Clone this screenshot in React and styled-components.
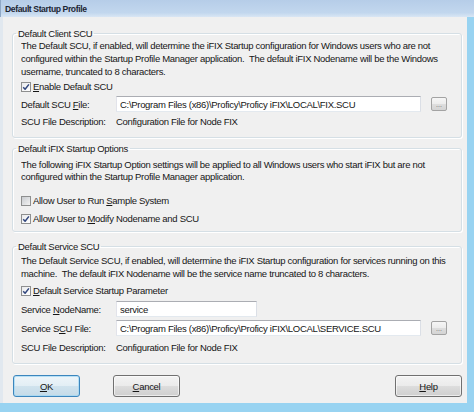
import React from 'react';
import styled, { createGlobalStyle } from 'styled-components';

const FONT = `"Liberation Sans", Arial, sans-serif`;

const Global = createGlobalStyle`
  html, body { margin: 0; padding: 0; }
  body {
    width: 474px; height: 412px; overflow: hidden; background: #98d3f1;
    font-family: ${FONT};
    color: #161616;
  }
`;

const Window = styled.div`
  width: 474px; height: 412px; box-sizing: border-box;
  display: flex; flex-direction: column;
  background: #98d3f1;
`;

const TitleBar = styled.div`
  height: 17px; flex: none; box-sizing: border-box;
  display: flex; align-items: center; padding-left: 4px;
  background: linear-gradient(#b6cde8, #c2d7ee 75%, #d9e6f4);
  border-left: 1px solid #8fa8c6;
  font-family: ${FONT}; font-weight: bold; font-size: 8.6px; letter-spacing: -0.4px; color: #1c2533;
`;

const Body = styled.div`
  flex: 1; display: flex; padding: 0 7px 9px 0; min-height: 0; min-width: 0;
`;

const Client = styled.div`
  flex: 1; box-sizing: border-box; min-width: 0;
  display: flex; flex-direction: column;
  background: #f0f0f0;
  border-left: 3px solid #e1e8ef;
  padding: 9.5px 5px 0 9px;
  font-family: ${FONT}; font-size: 9.5px; letter-spacing: -0.3px;
`;

const GroupBox = styled.fieldset`
  margin: ${p => p.$mt || 0}px 0 0 0;
  padding: 0 8px ${p => p.$pb}px 8px;
  border: 1px solid #d5dfe5;
  border-radius: 3px;
  box-shadow: inset 1px 1px 0 #fff, 1px 1px 0 #fff;
  min-width: 0;
  display: flex; flex-direction: column;
`;

const Legend = styled.legend`
  padding: 0 2px; margin-left: -5px;
  line-height: 13px; color: #161616;
`;

const Desc = styled.p`
  margin: ${p => p.$mt}px 0 0 0;
  line-height: ${p => p.$lh}px;
  white-space: nowrap; overflow: hidden;
`;

const Row = styled.div`
  height: ${p => p.$h}px; margin-top: ${p => p.$mt || 0}px;
  display: flex; align-items: center;
`;

const Label = styled.span`
  width: 95px; flex: none; white-space: nowrap;
`;

const U = styled.span`
  text-decoration: underline; text-underline-offset: 1px;
`;

const TextBox = styled.input`
  box-sizing: border-box; height: 16px; width: ${p => p.$w}px;
  margin: 0; padding: 0 3px;
  border: 1px solid #abadb3; border-left-color: #e2e3ea; border-right-color: #dbdfe6; border-bottom-color: #e3e9ef;
  background: #fff; outline: none;
  font-family: ${FONT}; font-size: 9.5px; letter-spacing: -0.3px; color: #161616;
`;

const Browse = styled.button`
  box-sizing: border-box; width: 16px; height: 14px; margin: 0 0 0 10px; padding: 0 0 2px 0;
  border: 1px solid #a3a3a3; border-radius: 2px;
  background: linear-gradient(#f6f6f6, #ececec 50%, #dedede 50%, #d4d4d4);
  font-family: ${FONT}; font-size: 7px; line-height: 7px; color: #666;
  display: flex; align-items: flex-end; justify-content: center;
`;

const CheckWrap = styled.label`
  display: flex; align-items: center; gap: 2px; white-space: nowrap;
`;

const Box = styled.span`
  box-sizing: border-box; width: 10px; height: 10px; flex: none;
  border: 1px solid #8e8f8f;
  background: ${p => p.$on
    ? 'linear-gradient(135deg, #e9eaec, #ffffff)'
    : 'linear-gradient(135deg, #c9ccd0, #f2f2f2)'};
  display: flex; align-items: center; justify-content: center;
`;

const Value = styled.span`
  white-space: nowrap;
`;

const ButtonRow = styled.div`
  margin-top: 11px; padding: 0 0 0 1px;
  display: flex; align-items: center;
`;

const Button = styled.button`
  box-sizing: border-box; width: 67px; height: 22px; margin: 0;
  margin-left: ${p => p.$ml || 0}px;
  border: 1px solid ${p => p.$default ? '#3c86bd' : '#707070'};
  border-radius: 3px;
  background: ${p => p.$default
    ? 'linear-gradient(#eef5f9, #e2eef5 50%, #d0e3ee 50%, #c5dbe8)'
    : 'linear-gradient(#f3f3f3, #ebebeb 50%, #dddddd 50%, #cfcfcf)'};
  box-shadow: inset 0 0 0 1px ${p => p.$default ? 'rgba(160,215,245,0.7)' : 'rgba(255,255,255,0.6)'};
  font-family: ${FONT}; font-size: 9.5px; letter-spacing: -0.3px; color: #161616;
  padding: 0;
`;

const Spacer = styled.div` flex: 1; `;

function Check({ on, children }) {
  return (
    <CheckWrap>
      <Box $on={on}>
        {on && (
          <svg width="8" height="8" viewBox="0 0 8 8">
            <path d="M1.2 4.2 L3.1 6.2 L6.9 1.4" stroke="#31467d" strokeWidth="1.5" fill="none" strokeLinejoin="round" />
          </svg>
        )}
      </Box>
      <span>{children}</span>
    </CheckWrap>
  );
}

export default function App() {
  return (
    <>
      <Global />
      <Window>
        <TitleBar>Default Startup Profile</TitleBar>
        <Body>
          <Client>
            <GroupBox $pb={7.5}>
              <Legend>Default Client SCU</Legend>
              <Desc $mt={-1} $lh={13}>
                The Default SCU, if enabled, will determine the iFIX Startup configuration for Windows users who are not<br />
                configured within the Startup Profile Manager application.&nbsp; The default iFIX Nodename will be the Windows<br />
                username, truncated to 8 characters.
              </Desc>
              <Row $h={18}>
                <Check on><U>E</U>nable Default SCU</Check>
              </Row>
              <Row $h={17}>
                <Label>Default SCU <U>F</U>ile:</Label>
                <TextBox $w={305} readOnly value={'C:\\Program Files (x86)\\Proficy\\Proficy iFIX\\LOCAL\\FIX.SCU'} />
                <Browse>...</Browse>
              </Row>
              <Row $h={17}>
                <Label>SCU File Description:</Label>
                <Value>Configuration File for Node FIX</Value>
              </Row>
            </GroupBox>

            <GroupBox $mt={3.5} $pb={3.5}>
              <Legend>Default iFIX Startup Options</Legend>
              <Desc $mt={4} $lh={12.5}>
                The following iFIX Startup Option settings will be applied to all Windows users who start iFIX but are not<br />
                configured within the Startup Profile Manager application.
              </Desc>
              <Row $h={18} $mt={8}>
                <Check>Allow User to Run <U>S</U>ample System</Check>
              </Row>
              <Row $h={18}>
                <Check on>Allow User to <U>M</U>odify Nodename and SCU</Check>
              </Row>
            </GroupBox>

            <GroupBox $mt={8} $pb={6}>
              <Legend>Default Service SCU</Legend>
              <Desc $mt={2} $lh={12.5}>
                The Default Service SCU, if enabled, will determine the iFIX Startup configuration for services running on this<br />
                machine.&nbsp; The default iFIX Nodename will be the service name truncated to 8 characters.
              </Desc>
              <Row $h={18} $mt={1.5}>
                <Check on><U>D</U>efault Service Startup Parameter</Check>
              </Row>
              <Row $h={19}>
                <Label>Service <U>N</U>odeName:</Label>
                <TextBox $w={141} readOnly value="service" />
              </Row>
              <Row $h={19.5}>
                <Label>Service S<U>C</U>U File:</Label>
                <TextBox $w={305} readOnly value={'C:\\Program Files (x86)\\Proficy\\Proficy iFIX\\LOCAL\\SERVICE.SCU'} />
                <Browse>...</Browse>
              </Row>
              <Row $h={19}>
                <Label>SCU File Description:</Label>
                <Value>Configuration File for Node FIX</Value>
              </Row>
            </GroupBox>

            <ButtonRow>
              <Button $default><U>O</U>K</Button>
              <Button $ml={33}><U>C</U>ancel</Button>
              <Spacer />
              <Button><U>H</U>elp</Button>
            </ButtonRow>
          </Client>
        </Body>
      </Window>
    </>
  );
}
